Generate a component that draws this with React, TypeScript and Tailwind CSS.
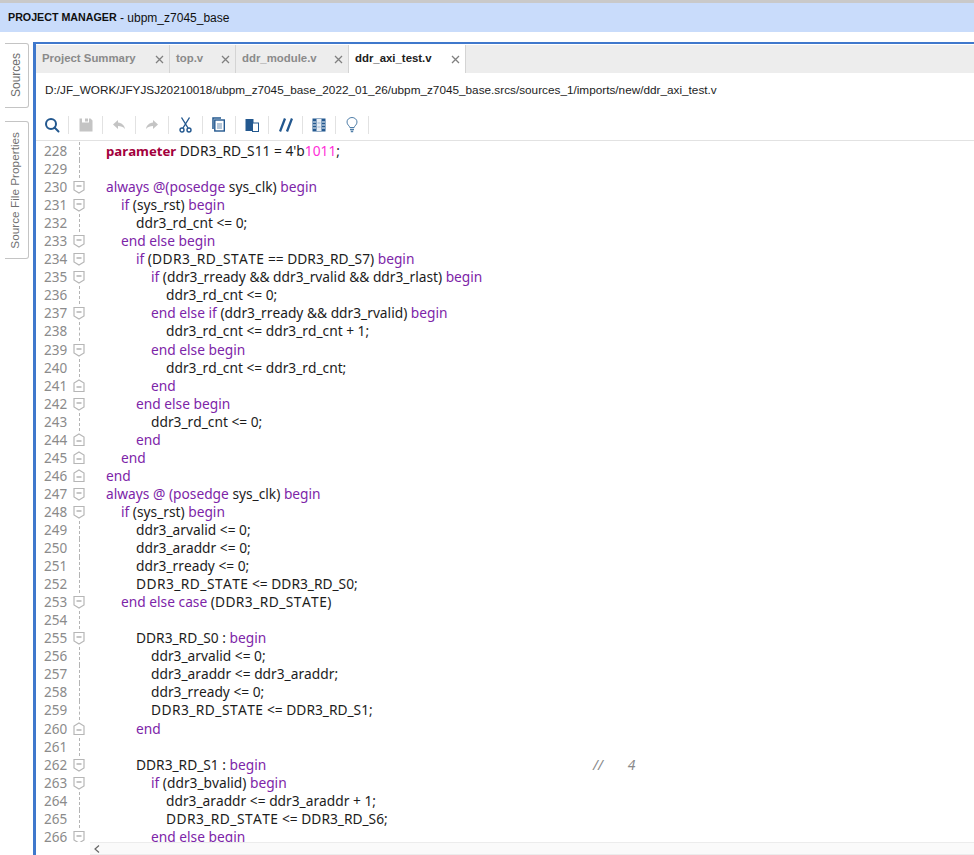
import type { ReactNode } from 'react'

type Fold = 'open' | 'close' | null

interface CodeLine {
  n: number
  indent: number
  text: string
  fold: Fold
}

const LINES: CodeLine[] = [
  { n: 229, indent: 0, text: '', fold: null },
  { n: 230, indent: 0, text: 'always @(posedge sys_clk) begin', fold: 'open' },
  { n: 231, indent: 1, text: 'if (sys_rst) begin', fold: 'open' },
  { n: 232, indent: 2, text: 'ddr3_rd_cnt <= 0;', fold: null },
  { n: 233, indent: 1, text: 'end else begin', fold: 'open' },
  { n: 234, indent: 2, text: 'if (DDR3_RD_STATE == DDR3_RD_S7) begin', fold: 'open' },
  { n: 235, indent: 3, text: 'if (ddr3_rready && ddr3_rvalid && ddr3_rlast) begin', fold: 'open' },
  { n: 236, indent: 4, text: 'ddr3_rd_cnt <= 0;', fold: null },
  { n: 237, indent: 3, text: 'end else if (ddr3_rready && ddr3_rvalid) begin', fold: 'open' },
  { n: 238, indent: 4, text: 'ddr3_rd_cnt <= ddr3_rd_cnt + 1;', fold: null },
  { n: 239, indent: 3, text: 'end else begin', fold: 'open' },
  { n: 240, indent: 4, text: 'ddr3_rd_cnt <= ddr3_rd_cnt;', fold: null },
  { n: 241, indent: 3, text: 'end', fold: 'close' },
  { n: 242, indent: 2, text: 'end else begin', fold: 'open' },
  { n: 243, indent: 3, text: 'ddr3_rd_cnt <= 0;', fold: null },
  { n: 244, indent: 2, text: 'end', fold: 'close' },
  { n: 245, indent: 1, text: 'end', fold: 'close' },
  { n: 246, indent: 0, text: 'end', fold: 'close' },
  { n: 247, indent: 0, text: 'always @ (posedge sys_clk) begin', fold: 'open' },
  { n: 248, indent: 1, text: 'if (sys_rst) begin', fold: 'open' },
  { n: 249, indent: 2, text: 'ddr3_arvalid <= 0;', fold: null },
  { n: 250, indent: 2, text: 'ddr3_araddr <= 0;', fold: null },
  { n: 251, indent: 2, text: 'ddr3_rready <= 0;', fold: null },
  { n: 252, indent: 2, text: 'DDR3_RD_STATE <= DDR3_RD_S0;', fold: null },
  { n: 253, indent: 1, text: 'end else case (DDR3_RD_STATE)', fold: 'open' },
  { n: 254, indent: 0, text: '', fold: null },
  { n: 255, indent: 2, text: 'DDR3_RD_S0 : begin', fold: 'open' },
  { n: 256, indent: 3, text: 'ddr3_arvalid <= 0;', fold: null },
  { n: 257, indent: 3, text: 'ddr3_araddr <= ddr3_araddr;', fold: null },
  { n: 258, indent: 3, text: 'ddr3_rready <= 0;', fold: null },
  { n: 259, indent: 3, text: 'DDR3_RD_STATE <= DDR3_RD_S1;', fold: null },
  { n: 260, indent: 2, text: 'end', fold: 'close' },
  { n: 261, indent: 0, text: '', fold: null },
  { n: 262, indent: 2, text: 'DDR3_RD_S1 : begin', fold: 'open' },
  { n: 263, indent: 3, text: 'if (ddr3_bvalid) begin', fold: 'open' },
  { n: 264, indent: 4, text: 'ddr3_araddr <= ddr3_araddr + 1;', fold: null },
  { n: 265, indent: 4, text: 'DDR3_RD_STATE <= DDR3_RD_S6;', fold: null },
  { n: 266, indent: 3, text: 'end else begin', fold: 'open' },
]

const INDENT = ['pl-0', 'pl-[15px]', 'pl-[30px]', 'pl-[45px]', 'pl-[60px]']

function highlight(text: string): ReactNode[] {
  const parts = text.split(/(\balways\b|\bbegin\b|\bend\b|\belse\b|\bif\b|\bcase\b|@ ?\(posedge|DDR3_RD_STATE)/)
  return parts.map((p, i) => {
    if (p === 'DDR3_RD_STATE') return <span key={i} className="tracking-[0.45px]">{p}</span>
    return i % 2 === 1 ? (
      <span key={i} className="text-[#7d25a8]">{p}</span>
    ) : (
      <span key={i}>{p}</span>
    )
  })
}

function FoldMark({ fold }: { fold: Fold }) {
  if (!fold) {
    return <div className="h-full w-0 border-l border-dashed border-[#b4b4b4]" />
  }
  const shape = fold === 'open' ? 'M1 1.5h10v8.5l-5 3-5-3z' : 'M1 12.5h10v-8.5l-5-3-5 3z'
  const dash = fold === 'open' ? 'M3.5 6h5' : 'M3.5 8h5'
  return (
    <svg width="12" height="14" viewBox="0 0 12 14" fill="#ffffff" stroke="#b6b6b6" strokeWidth="1.2">
      <path d={shape} />
      <path d={dash} stroke="#a0a0a0" />
    </svg>
  )
}

function Row({ n, fold, children }: { n: number; fold: Fold; children: ReactNode }) {
  return (
    <div className="flex h-[18.05px] items-center whitespace-pre">
      <div className="w-[37px] shrink-0 pl-[8px] text-[13.5px] text-[#8b8b8b]">{n}</div>
      <div className="flex h-full w-[12px] shrink-0 items-center justify-center">
        <FoldMark fold={fold} />
      </div>
      <div className="flex flex-1 pl-[21px] text-[#1c1c1c] [font-kerning:none]">{children}</div>
    </div>
  )
}

function Tab({ label, active, width }: { label: string; active?: boolean; width: string }) {
  return (
    <div
      className={`flex h-full items-center justify-between border-r border-[#d4d4d4] pl-[6px] pr-[4px] text-[11.4px] font-bold ${width} ${
        active ? 'bg-white text-[#202020]' : 'text-[#8a8a8a]'
      }`}
    >
      <span>{label}</span>
      <svg width="9" height="9" viewBox="0 0 9 9" stroke="#808080" strokeWidth="1.3" className="mr-[1px]">
        <path d="M1 1l7 7M8 1l-7 7" />
      </svg>
    </div>
  )
}

function ToolCell({ children }: { children: ReactNode }) {
  return (
    <div className="flex h-[18px] w-[33.35px] items-center justify-center border-r border-[#e2e2e2]">
      {children}
    </div>
  )
}

const NAVY = '#23588f'
const FADED = '#c4c4c4'

function Toolbar() {
  return (
    <div className="flex h-[35px] items-center border-b border-[#e2e2e2] pb-[1px] pt-[4px]">
      <ToolCell>
        <svg width="16" height="16" viewBox="0 0 16 16" fill="none" stroke={NAVY} strokeWidth="2">
          <circle cx="7" cy="7" r="5" />
          <path d="M10.5 10.5l4 4" strokeLinecap="round" />
        </svg>
      </ToolCell>
      <ToolCell>
        <svg width="14" height="14" viewBox="0 0 14 14" fill={FADED}>
          <path d="M0.5 0.5h2.5v4h7v-4h1.5l2 2v11h-13z" />
          <path d="M6 0.5h3v3h-3z" />
        </svg>
      </ToolCell>
      <ToolCell>
        <svg width="14" height="12" viewBox="0 0 14 12" fill={FADED}>
          <path d="M6 1L1 5.5 6 10V7c3 0 5 .8 7 3-.5-3.5-3-6-7-6.5z" />
        </svg>
      </ToolCell>
      <ToolCell>
        <svg width="14" height="12" viewBox="0 0 14 12" fill={FADED}>
          <path d="M8 1l5 4.5L8 10V7c-3 0-5 .8-7 3 .5-3.5 3-6 7-6.5z" />
        </svg>
      </ToolCell>
      <ToolCell>
        <svg width="13" height="16" viewBox="0 0 13 16" fill="none" stroke={NAVY} strokeWidth="1.4">
          <path d="M2.5 0.5L9 11M10.5 0.5L4 11" />
          <circle cx="3" cy="13" r="2" />
          <circle cx="10" cy="13" r="2" />
        </svg>
      </ToolCell>
      <ToolCell>
        <svg width="13" height="15" viewBox="0 0 13 15" fill="none">
          <path d="M1 12V1h8" stroke={NAVY} strokeWidth="1.5" />
          <rect x="2.8" y="3" width="9.5" height="11" fill="#fff" stroke={NAVY} strokeWidth="1.4" />
          <path d="M5 7h5M5 9h5M5 11h5" stroke="#6d8fb3" strokeWidth="1" />
        </svg>
      </ToolCell>
      <ToolCell>
        <svg width="14" height="14" viewBox="0 0 14 14">
          <path d="M0.5 1h8v12h-8z" fill={NAVY} />
          <rect x="7.5" y="5" width="6" height="8.5" fill="#fff" stroke={NAVY} strokeWidth="1" />
        </svg>
      </ToolCell>
      <ToolCell>
        <svg width="14" height="14" viewBox="0 0 14 14" stroke={NAVY} strokeWidth="2.3" fill="none">
          <path d="M6 0.5L1 13.5M13 0.5L8 13.5" />
        </svg>
      </ToolCell>
      <ToolCell>
        <svg width="14" height="14" viewBox="0 0 14 14">
          <rect x="0.5" y="0.5" width="13" height="13" fill={NAVY} />
          <path d="M4.5 1h5v12h-5z" fill="#e8eef5" />
          <path d="M1 4h3M1 7h3M1 10h3M10 4h3M10 7h3M10 10h3" stroke="#fff" strokeWidth="1" />
          <path d="M5.5 5h3M5.5 9h3" stroke="#9db5cf" strokeWidth="1" />
        </svg>
      </ToolCell>
      <ToolCell>
        <svg width="12" height="16" viewBox="0 0 12 16" fill="none" stroke="#4f7ea8" strokeWidth="1">
          <path d="M3.8 10.5C3.5 8.5 1 8 1 5a5 4.5 0 0 1 10 0c0 3-2.5 3.5-2.8 5.5z" />
          <path d="M4 12.5h4M4.8 14.5h2.4" strokeWidth="1.3" />
        </svg>
      </ToolCell>
    </div>
  )
}

function SideTab({ label, height, size }: { label: string; height: string; size: string }) {
  return (
    <div
      className={`ml-[5px] flex w-[24px] items-center justify-center rounded-r-[3px] border border-l-0 border-[#c4c4c4] pr-[2px] ${height}`}
    >
      <span className={`rotate-180 text-[#6f6f6f] [writing-mode:vertical-rl] ${size}`}>{label}</span>
    </div>
  )
}

export default function App() {
  return (
    <div className="flex h-[855px] w-[974px] flex-col overflow-hidden bg-white font-['Noto_Sans',sans-serif]">
      <div className="h-[3px] bg-[#c9c9c9]" />
      <div className="flex h-[29px] items-center bg-[#c9dcfb] pl-[8px] font-['Liberation_Sans',sans-serif] text-[#101010]">
        <span className="text-[10.7px] font-bold">PROJECT MANAGER</span>
        <span className="text-[12px]">&nbsp;- ubpm_z7045_base</span>
      </div>

      <div className="flex min-h-0 flex-1 pt-[10px]">
        <div className="flex w-[33px] shrink-0 flex-col gap-[13px] pt-[1px] font-['Liberation_Sans',sans-serif]">
          <SideTab label="Sources" height="h-[65px]" size="text-[12px]" />
          <SideTab label="Source File Properties" height="h-[138px]" size="text-[11.8px]" />
        </div>

        <div className="flex min-w-0 flex-1 flex-col border-l-[3px] border-t-[2px] border-[#3f78cc]">
          <div className="mt-[1px] flex h-[28px] bg-[#ededed] font-['Liberation_Sans',sans-serif]">
            <Tab label="Project Summary" width="w-[134px]" />
            <Tab label="top.v" width="w-[66px]" />
            <Tab label="ddr_module.v" width="w-[113px]" />
            <Tab label="ddr_axi_test.v" active width="w-[117px]" />
          </div>
          <div className="flex h-[33px] items-center pl-[9px] font-['Liberation_Sans',sans-serif] text-[11.77px] text-[#1c1c1c]">
            D:/JF_WORK/JFYJSJ20210018/ubpm_z7045_base_2022_01_26/ubpm_z7045_base.srcs/sources_1/imports/new/ddr_axi_test.v
          </div>
          <Toolbar />

          <div className="min-h-0 flex-1 overflow-hidden pt-[1px] text-[13.75px] leading-[18px]">
            <Row n={228} fold={null}>
              <span className="text-[13.2px] font-bold text-[#a3003c]">parameter</span>
              <span> DDR3_RD_S11 = 4'b</span>
              <span className="text-[#ff2fd8]">1011</span>
              <span>;</span>
            </Row>
            {LINES.map((l) => (
              <Row key={l.n} n={l.n} fold={l.fold}>
                <span className={l.n === 262 ? 'w-[487px] shrink-0 pl-[30px]' : INDENT[l.indent]}>
                  {highlight(l.text)}
                </span>
                {l.n === 262 && (
                  <span className="italic text-[#8a8a8a]">//&nbsp;&nbsp;&nbsp;&nbsp;&nbsp;&nbsp;&nbsp;4</span>
                )}
              </Row>
            ))}
          </div>

          <div className="flex h-[13px] shrink-0 pl-[54px]">
            <div className="flex flex-1 items-center border-y border-[#ececec] bg-[#fafafa] pl-[4px]">
              <svg width="6" height="8" viewBox="0 0 6 8" fill="none" stroke="#666666" strokeWidth="1.2">
                <path d="M5 0.5L1 4l4 3.5" />
              </svg>
            </div>
          </div>
        </div>
      </div>
    </div>
  )
}
